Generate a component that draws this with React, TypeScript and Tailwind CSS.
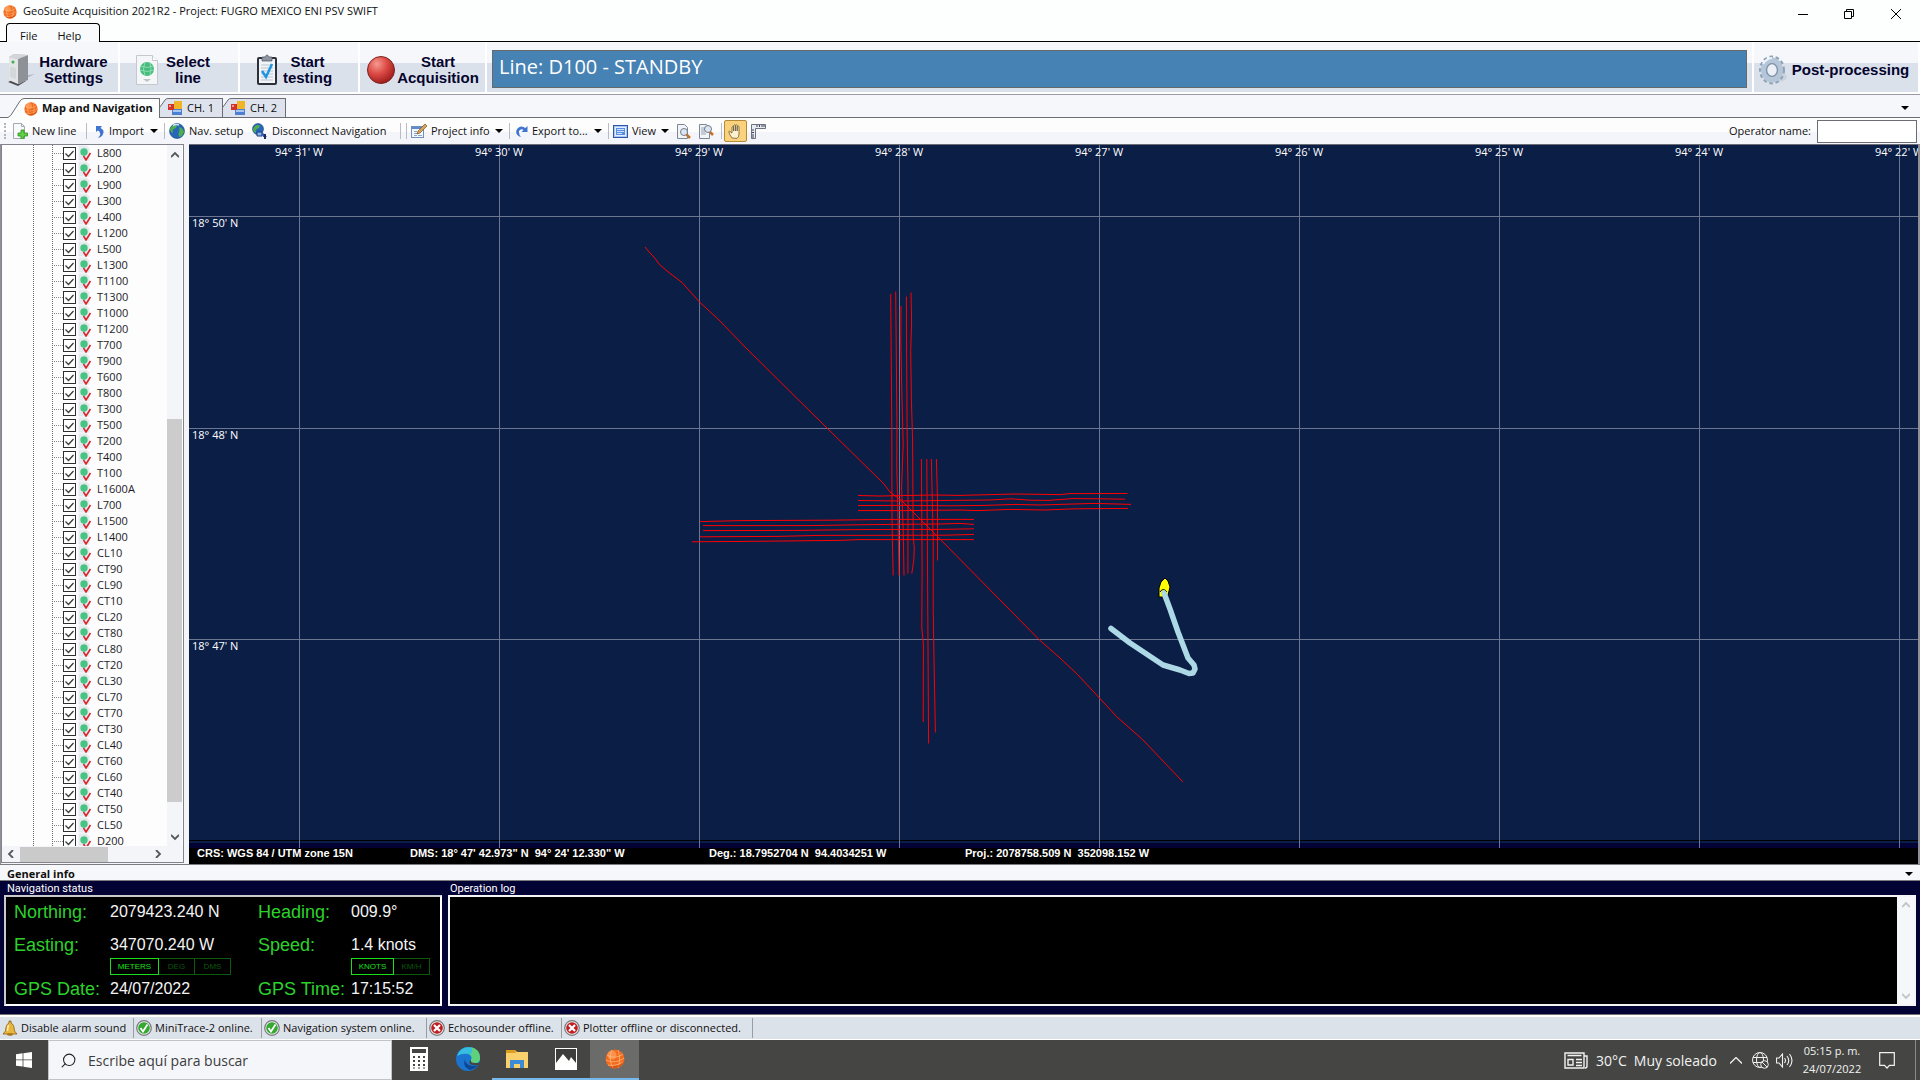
import type { ReactNode } from "react";
import { Search } from "lucide-react";

const LINES = [
  "L800", "L200", "L900", "L300", "L400", "L1200", "L500", "L1300", "T1100", "T1300", "T1000",
  "T1200", "T700", "T900", "T600", "T800", "T300", "T500", "T200", "T400", "T100", "L1600A",
  "L700", "L1500", "L1400", "CL10", "CT90", "CL90", "CT10", "CL20", "CT80", "CL80", "CT20",
  "CL30", "CL70", "CT70", "CT30", "CL40", "CT60", "CL60", "CT40", "CT50", "CL50", "D200",
];

// Map canvas coordinates, origin at its top left corner
const MERIDIANS = [
  { x: 110, label: "94° 31' W" },
  { x: 310, label: "94° 30' W" },
  { x: 510, label: "94° 29' W" },
  { x: 710, label: "94° 28' W" },
  { x: 910, label: "94° 27' W" },
  { x: 1110, label: "94° 26' W" },
  { x: 1310, label: "94° 25' W" },
  { x: 1510, label: "94° 24' W" },
  { x: 1710, label: "94° 22' W" },
];

const PARALLELS = [
  { y: 72, label: "18° 50' N" },
  { y: 284, label: "18° 48' N" },
  { y: 495, label: "18° 47' N" },
];

// Survey lines, in projected screen units
const SURVEY = [
  "645,247 650,253 654,257 659,264 667,271 682,282.5 700,302.5 719,320 745,347 827.5,428.5 884,484 890,492 901.5,500.5 934,533 1005,605 1039,639.5 1060,658 1077.5,674.5 1099.5,698 1116.5,716.5 1142.5,739.5 1183,782",
  "890.7,294 891.8,430 892,520 893.2,575.5",
  "895.7,291.5 897,430 896.8,466 898,520 899,575.5",
  "901,306 900.8,340 902,400 903.2,444 901.6,487 903.2,530 904,575.5",
  "906.4,296.5 906.6,350 907.1,430 908,487 907.9,573.5",
  "911,292.5 911.6,323 910.7,351.5 911.4,400 912.6,440 913.2,537 914.3,548 913.8,560 911.8,573.5",
  "921.4,459 922.1,566 921.8,628 923.4,644 923.2,722",
  "926.8,459 927.5,566 928.6,743.5",
  "931.4,459 933.2,541 933.2,608.5 934,660 935.4,732.5",
  "936.4,459 937.5,500 937.5,560.5",
  "858,495.5 880,496 934,495 960,495.4 1015,494 1060,494.6 1070,493.6 1127.5,493.5",
  "858,500.5 900,501 951,500.4 990,500 1011,498.8 1030,500.2 1048,500.4 1073,498.6 1100,498.8 1125,499.2",
  "858,505.5 905,505.4 951,505.8 985,505.4 1015,504.4 1040,505 1073,504 1095,503.4 1131,504.4",
  "858,510.6 905,510.6 960,510 978,510.6 1010,509.4 1045,510 1075,508.8 1128,508.4",
  "700,521.6 742,520.6 830,520.2 890,519.4 974,519.4",
  "703,525.6 810,525.6 870,524.6 940,524 960,523.4 974,524.4",
  "703,530.6 800,530.4 858,529.6 940,529.4 974,528.8",
  "700,536.8 777,536.4 820,535.4 945,535.2 974,534.4",
  "692,541.8 744,541.4 840,540.4 859,539.6 974,539.6",
];

const TREND = "1111,628.5 1130,643 1142,651 1163,665 1180,670 1189,673.5 1193,673 1195,669 1194,665 1188,658 1178,632 1170,609 1164,593";

const STATUS = [
  { kind: "bell", text: "Disable alarm sound", width: "w-[134px]" },
  { kind: "ok", text: "MiniTrace-2 online.", width: "w-[128px]" },
  { kind: "ok", text: "Navigation system online.", width: "w-[165px]" },
  { kind: "error", text: "Echosounder offline.", width: "w-[135px]" },
  { kind: "error", text: "Plotter offline or disconnected.", width: "w-[191px]" },
];

function OrangeGlobe({ size = 14 }: { size?: number }) {
  return (
    <svg width={size} height={size} viewBox="0 0 20 20" className="shrink-0">
      <circle cx="10" cy="10" r="9.5" fill="#f26a1b" />
      <circle cx="7" cy="6" r="4.5" fill="#ffa25e" opacity="0.7" />
      <g fill="none" stroke="#ffc08a" strokeWidth="0.7">
        <path d="M2 6c5 3 11 3 16-1M1 11c6 3 13 2 18-2M3 16c5 1 10 0 15-3M7 1c-3 6-2 12 1 18M13 1c2 6 2 12 0 18" />
      </g>
      <path d="M4 17a9.500 9.500 0 0 0 15-5c-4 5-9 6-15 5z" fill="#c9480a" opacity="0.7" />
    </svg>
  );
}

function ServerIcon() {
  return (
    <svg width="28" height="32" viewBox="0 0 28 32" className="shrink-0">
      <path d="M13 27l15-7-6 1z" fill="#aeb4bd" />
      <path d="M1 28l10 4 8-5-9-3z" fill="#4e4e52" />
      <path d="M2 3l5-3 14 1v24l-9 5-10-4z" fill="#b9bcc0" />
      <path d="M2 3l9 2v25l-9-4z" fill="#e2e4e6" />
      <path d="M11 5l10-4v25l-10 4z" fill="#8e9195" />
      <path d="M2 3l5-3 14 1-10 4z" fill="#d3d5d8" />
      <circle cx="6" cy="8" r="1.500" fill="#3fae4a" />
      <path d="M4 13v10M6 13v11M8 14v11" stroke="#c2c5c8" strokeWidth="0.8" />
    </svg>
  );
}

function SelectLineIcon() {
  return (
    <svg width="22" height="30" viewBox="0 0 22 30" className="shrink-0">
      <path d="M.5.5h16l5 5v24H.5z" fill="#f4f6f8" stroke="#c4c9d0" />
      <path d="M16.500.5v5h5" fill="#fff" stroke="#c4c9d0" />
      <circle cx="11" cy="14" r="7" fill="#46bd7c" />
      <path d="M5 11q6 3 12 0M4 15q7 3 14 0M9 7q-3 7 0 14M14 8q2 6 0 12" fill="none" stroke="#9be0bb" strokeWidth="0.8" />
      <path d="M7 24l4 3 4-3z" fill="#c0c4c8" />
    </svg>
  );
}

function ClipboardIcon() {
  return (
    <svg width="20" height="32" viewBox="0 0 20 32" className="shrink-0">
      <rect x="1" y="4" width="18" height="26" rx="1" fill="#f1f4f8" stroke="#2c3038" strokeWidth="2" />
      <path d="M5 3h3q2-4 4 0h3v4H5z" fill="#8d96a3" stroke="#4b5059" strokeWidth="0.7" />
      <path d="M4 11h12M4 14h12M4 17h12M4 20h12M4 23h12M4 26h12" stroke="#bac3d0" />
      <path d="M5 17l4 6 6-13" fill="none" stroke="#1e96e0" strokeWidth="2.500" />
    </svg>
  );
}

function RedBall() {
  return (
    <svg width="28" height="28" viewBox="0 0 28 28" className="shrink-0">
      <defs>
        <radialGradient id="ball" cx="0.35" cy="0.28" r="0.75">
          <stop offset="0" stopColor="#f59a90" />
          <stop offset="0.5" stopColor="#dc4a44" />
          <stop offset="1" stopColor="#9c1c1c" />
        </radialGradient>
      </defs>
      <circle cx="14" cy="14" r="13.500" fill="url(#ball)" stroke="#7c2323" />
    </svg>
  );
}

function GearIcon() {
  return (
    <svg width="28" height="30" viewBox="0 0 28 30" className="shrink-0">
      <ellipse cx="18" cy="22" rx="10" ry="5" fill="#c6ccd4" opacity="0.7" />
      <ellipse cx="13" cy="15" rx="11.500" ry="13" fill="none" stroke="#8fa3b8" strokeWidth="3" strokeDasharray="3.500 2.600" />
      <ellipse cx="13" cy="15" rx="8.500" ry="10" fill="#dbe5ef" stroke="#b4c6d8" strokeWidth="5" />
      <ellipse cx="13" cy="15" rx="5.500" ry="6.500" fill="#eaf0f6" stroke="#8494ab" strokeWidth="1.500" />
      <path d="M4 9q4-6 9-6" fill="none" stroke="#eef5fb" strokeWidth="2" />
    </svg>
  );
}

function ChannelIcon() {
  return (
    <svg width="14" height="14" viewBox="0 0 14 14" className="shrink-0">
      <rect x="6" y="0" width="8" height="8" fill="#f0b429" />
      <rect x="4" y="8" width="10" height="6" fill="#4c7fd0" />
      <rect x="5" y="9" width="8" height="2" fill="#a9c6f0" />
      <rect x="0" y="3" width="6" height="6" fill="#d0342c" />
      <rect x="1" y="4" width="2" height="2" fill="#f19a94" />
    </svg>
  );
}

function NewLineIcon() {
  return (
    <svg width="16" height="16" viewBox="0 0 16 16" className="shrink-0">
      <path d="M1.500.5h8l3 3v12h-11z" fill="#f7f9fb" stroke="#a5abb3" />
      <path d="M9.500.5v3h3" fill="none" stroke="#a5abb3" />
      <path d="M9 7h3v3h3.500v3H12v3H9v-3H6v-3h3z" fill="#5fd045" stroke="#2b8a1d" strokeWidth="0.8" />
    </svg>
  );
}

function ImportIcon() {
  return (
    <svg width="10" height="13" viewBox="0 0 10 13" className="shrink-0">
      <path d="M1 1h6L5.500 3Q10 5 8 9q-1 3-5 4 3-3 2-5-.5-2-2-2.500L1 7z" fill="#3f74cf" />
    </svg>
  );
}

function ExportIcon() {
  return (
    <svg width="12" height="13" viewBox="0 0 12 13" className="shrink-0">
      <path d="M11.500 1v6h-6l2-2Q5 3 3 6q-.500 3 2 6Q-1 10 .5 5 4-1 9.500 3z" fill="#3f74cf" />
    </svg>
  );
}

function EarthIcon({ plug = false }: { plug?: boolean }) {
  return (
    <svg width="16" height="16" viewBox="0 0 16 16" className="shrink-0">
      <circle cx={plug ? 6 : 8} cy={plug ? 6 : 8} r={plug ? 5.5 : 7.5} fill="#2766b8" stroke="#1b4680" strokeWidth="0.6" />
      <path d="M3 3q3-2 5 0-1 3-3 3t-1 4q-3-1-3-4z" fill="#4fae4c" />
      {plug ? (
        <>
          <path d="M5 9h5v4H5z" fill="#8fb5ea" stroke="#143a7c" />
          <path d="M9 8l6 6h-4z" fill="#2c4fa8" />
          <path d="M13 11v5" stroke="#1b2d5c" strokeWidth="2" />
        </>
      ) : (
        <>
          <path d="M10 4q4 1 5 5-2 5-5 5-1-3 0-5t0-5z" fill="#4fae4c" />
          <path d="M4 2.500q3-1.500 6-.5" fill="none" stroke="#cfe6fb" strokeWidth="1.500" />
        </>
      )}
    </svg>
  );
}

function ProjectIcon() {
  return (
    <svg width="16" height="14" viewBox="0 0 16 14" className="shrink-0">
      <rect x="0.500" y="2.500" width="12" height="11" fill="#f4f8fd" stroke="#6d8fbd" />
      <rect x="1" y="3" width="11" height="2" fill="#5d8bd0" />
      <path d="M3 7.500h3M3 9.500h3M3 11.500h3M7 11.500h4" stroke="#8aa5c8" />
      <path d="M6 10l1-3 7-7 2 2-7 7z" fill="#d9a35b" stroke="#7a5325" strokeWidth="0.7" />
    </svg>
  );
}

function ViewIcon() {
  return (
    <svg width="15" height="13" viewBox="0 0 15 13" className="shrink-0">
      <rect x="0.500" y="0.500" width="14" height="12" fill="#a9c6f5" stroke="#2e56a6" />
      <rect x="2.500" y="2.500" width="10" height="8" fill="#5b8de0" stroke="#e3edfb" />
      <path d="M4 4.500h7M4 6.500h7M4 8.500h5" stroke="#cfe0fa" />
    </svg>
  );
}

function PreviewIcon({ zoomed = false }: { zoomed?: boolean }) {
  return (
    <svg width="16" height="15" viewBox="0 0 16 15" className="shrink-0">
      <path d="M1.500.5h7l3 3v11h-10z" fill="#f1f4f8" stroke="#7d8793" />
      {zoomed && <path d="M3 4h4M3 6h4M3 8h4M3 10h5" stroke="#9aa4b1" />}
      <circle cx={zoomed ? 10 : 8} cy={zoomed ? 5 : 8} r="3.500" fill="#dbe6f2" stroke="#737d89" />
      <path d={zoomed ? "M12 8l3 3" : "M10.500 10.500l3.500 3.500"} stroke="#c4702b" strokeWidth="2.500" />
    </svg>
  );
}

function HandIcon() {
  return (
    <svg width="15" height="15" viewBox="0 0 15 15">
      <path
        d="M4 14Q1 10 .8 7.500q.7-1 2.200.8L4 9V3q.8-1.200 1.600 0V7 1.500q1-1.200 1.800 0V7 1.200q1-1 1.800 0V7 2.500q1-1 1.800 0V10q0 3-2 4.400z"
        fill="#fdf0d0"
        stroke="#6d5a35"
        strokeWidth="0.8"
      />
    </svg>
  );
}

function RulerIcon() {
  return (
    <svg width="15" height="15" viewBox="0 0 15 15">
      <path d="M.5.5h14v4h-10v10h-4z" fill="#e8ecf2" stroke="#5b6472" strokeWidth="0.9" />
      <path d="M6 1v2M8.500 1v2M11 1v2M13 1v2M1 6h2M1 8.500h2M1 11h2M1 13h2" stroke="#39404c" />
    </svg>
  );
}

function StatusIcon({ kind }: { kind: string }) {
  if (kind === "bell") {
    return (
      <svg width="16" height="16" viewBox="0 0 16 16" className="shrink-0">
        <path d="M7 1h2v2q3 1 3.500 8l2.500 3H1l2.500-3Q4 4 7 3z" fill="#eab53c" stroke="#8a5f10" strokeWidth="0.8" />
        <path d="M6.500 5q-1 3-1 6" stroke="#fdeeb6" strokeWidth="1.500" fill="none" />
        <ellipse cx="8" cy="14.500" rx="3" ry="1.200" fill="#a8741a" />
      </svg>
    );
  }
  const ok = kind === "ok";
  return (
    <svg width="16" height="16" viewBox="0 0 16 16" className="shrink-0">
      <circle cx="8" cy="8" r="7.300" fill="#e9e9ea" stroke="#77797c" strokeWidth="1.200" />
      <circle cx="8" cy="8" r="5.800" fill={ok ? "#35a832" : "#c01f22"} />
      {ok ? (
        <path d="M4.500 8l2.500 3.500 4.500-7" fill="none" stroke="#fff" strokeWidth="1.800" />
      ) : (
        <path d="M5 5l6 6M11 5l-6 6" stroke="#fff" strokeWidth="2.200" />
      )}
    </svg>
  );
}

function Caret({ className = "" }: { className?: string }) {
  return (
    <svg width="8" height="4" viewBox="0 0 8 4" className={`shrink-0 ${className}`}>
      <path d="M0 0h8L4 4z" fill="#000" />
    </svg>
  );
}

function Chevron({ d, color = "#55565a" }: { d: string; color?: string }) {
  return (
    <svg width="8" height="8" viewBox="0 0 8 8">
      <path d={d} fill="none" stroke={color} strokeWidth="1.800" />
    </svg>
  );
}

function RibbonButton({ icon, width, children }: { icon: ReactNode; width: string; children: ReactNode }) {
  return (
    <button
      type="button"
      className={`flex shrink-0 items-center border-r-2 border-white pt-1.5 text-[15px] leading-4 font-bold text-[#04042e] ${width}`}
    >
      {icon}
      <span className="flex-1 text-center">{children}</span>
    </button>
  );
}

function ToolButton({ icon, width, label, caret = false }: { icon: ReactNode; width: string; label: string; caret?: boolean }) {
  return (
    <button type="button" className={`flex h-full shrink-0 items-center gap-1 whitespace-nowrap ${width}`}>
      {icon}
      <span>{label}</span>
      {caret && <Caret className="ml-auto" />}
    </button>
  );
}

function Separator({ className = "mx-1" }: { className?: string }) {
  return <div className={`h-4 w-px shrink-0 bg-[#b9bcc6] ${className}`} />;
}

function TitleBar() {
  return (
    <header className="shrink-0">
      <div className="flex h-[23px] items-center pl-[3px]">
        <OrangeGlobe />
        <h1 className="ml-1.5 flex-1 text-[11px]">GeoSuite Acquisition 2021R2 - Project: FUGRO MEXICO ENI PSV SWIFT</h1>
        <button type="button" aria-label="Minimize" className="flex h-full w-[46px] items-end justify-center">
          <svg width="10" height="10" viewBox="0 0 10 10"><path d="M0 1.500h10" stroke="#000" /></svg>
        </button>
        <button type="button" aria-label="Restore" className="flex h-full w-[46px] items-end justify-center pb-1">
          <svg width="10" height="10" viewBox="0 0 10 10">
            <path d="M.5 2.500h7v7h-7zM2.500 2.500v-2h7v7h-2" fill="none" stroke="#000" />
          </svg>
        </button>
        <button type="button" aria-label="Close" className="flex h-full w-[48px] items-end justify-center pb-1">
          <svg width="10" height="10" viewBox="0 0 10 10"><path d="M0 0l10 10M10 0L0 10" stroke="#000" /></svg>
        </button>
      </div>
      <nav className="flex h-[19px] text-[11px]">
        <div className="w-1.5 border-b border-black" />
        <div className="flex w-[94px] items-center gap-5 rounded-t border-x border-t border-black bg-[#f9fafc] pt-1.5 pl-[13px]">
          <button type="button">File</button>
          <button type="button">Help</button>
        </div>
        <div className="flex-1 border-b border-black" />
      </nav>
    </header>
  );
}

function Ribbon() {
  return (
    <div className="flex h-[52px] shrink-0 border-b-2 border-white bg-linear-to-b from-[#f6f7fb] from-43% to-[#dbe1ea] to-43% font-['Liberation_Sans',sans-serif]">
      <RibbonButton icon={<ServerIcon />} width="w-[120px] pl-[7px] pr-1.5">Hardware<br />Settings</RibbonButton>
      <RibbonButton icon={<SelectLineIcon />} width="w-[120px] pl-4 pr-5">Select<br />line</RibbonButton>
      <RibbonButton icon={<ClipboardIcon />} width="w-[120px] pl-[17px] pr-5">Start<br />testing</RibbonButton>
      <RibbonButton icon={<RedBall />} width="w-[127px] pl-[7px] pr-1">Start<br />Acquisition</RibbonButton>
      <div className="mt-2 mb-1 ml-[5px] mr-[5px] flex flex-1 items-center border border-[#666a6c] bg-[#4682b4] pb-1 pl-1.5 font-['Open_Sans',sans-serif] text-[20px] text-white">
        Line: D100 - STANDBY
      </div>
      <div className="w-0.5 bg-white" />
      <RibbonButton icon={<GearIcon />} width="w-[166px] pl-[5px] pr-1">Post-processing</RibbonButton>
    </div>
  );
}

function TabStrip() {
  return (
    <div role="tablist" className="flex h-[24px] shrink-0 items-end border-t border-[#9a9aa4] bg-[#f6f7fb] text-[11px]">
      <div className="h-full w-2 border-b border-[#6c6c74]" />
      <button type="button" role="tab" aria-selected="true" className="flex h-5 items-end">
        <svg width="16" height="20" viewBox="0 0 16 20" className="shrink-0">
          <path d="M0 20Q3 19 5 14L12 3q2-2.500 4-2.500V20z" fill="#fcfdfd" />
          <path d="M0 19.500Q3 18 5 14L12 3q2-2.500 4-2.500" fill="none" stroke="#6c6c74" />
        </svg>
        <span className="flex h-5 w-[136px] items-center gap-1 border-t border-r border-[#6c6c74] bg-[#fcfdfd] font-bold whitespace-nowrap">
          <OrangeGlobe />
          Map and Navigation
        </span>
      </button>
      {["CH. 1", "CH. 2"].map((name) => (
        <button key={name} type="button" role="tab" aria-selected="false" className="flex h-5 items-end border-b border-[#6c6c74]">
          <svg width="8" height="19" viewBox="0 0 8 19" className="shrink-0">
            <path d="M0 19V9L5 2q1-1.500 3-1.500V19z" fill="#dde2ec" />
            <path d="M0 9L5 2q1-1.500 3-1.500" fill="none" stroke="#6c6c74" />
          </svg>
          <span className="flex h-[19px] w-[55px] items-center gap-[5px] border-t border-r border-[#6c6c74] bg-[#dde2ec]">
            <ChannelIcon />
            {name}
          </span>
        </button>
      ))}
      <div className="flex h-full flex-1 items-center justify-end border-b border-[#6c6c74] pr-[11px] pt-1">
        <Caret />
      </div>
    </div>
  );
}

function Toolbar() {
  return (
    <div className="flex h-[26px] shrink-0 items-center bg-linear-to-b from-[#fdfdfe] from-55% to-[#f4f5fa] to-55% pl-1 text-[11px]">
      <div className="mr-1.5 h-4 border-l-2 border-dotted border-[#b4b6be]" />
      <ToolButton icon={<NewLineIcon />} width="w-[68px]" label="New line" />
      <Separator className="ml-1.5 mr-2" />
      <ToolButton icon={<ImportIcon />} width="w-[63px]" label="Import" caret />
      <Separator className="ml-1.5 mr-1" />
      <ToolButton icon={<EarthIcon />} width="w-[83px]" label="Nav. setup" />
      <ToolButton icon={<EarthIcon plug />} width="w-[143px]" label="Disconnect Navigation" />
      <Separator className="ml-[5px] mr-[5px]" />
      <Separator className="mr-1" />
      <ToolButton icon={<ProjectIcon />} width="w-[92px]" label="Project info" caret />
      <Separator className="mx-1.5" />
      <ToolButton icon={<ExportIcon />} width="w-[86px]" label="Export to..." caret />
      <Separator className="ml-1.5 mr-1" />
      <ToolButton icon={<ViewIcon />} width="w-[56px]" label="View" caret />
      <button type="button" aria-label="Print preview" className="ml-[7px] w-[22px]"><PreviewIcon /></button>
      <button type="button" aria-label="Page zoom" className="w-4"><PreviewIcon zoomed /></button>
      <Separator className="ml-[7px] mr-0.5" />
      <button
        type="button"
        aria-label="Pan"
        aria-pressed="true"
        className="flex h-[22px] w-[23px] shrink-0 items-center justify-center rounded-xs border border-[#b5893a] bg-[#fbd27c]"
      >
        <HandIcon />
      </button>
      <button type="button" aria-label="Measure" className="ml-1 shrink-0"><RulerIcon /></button>
      <label htmlFor="operator" className="mr-1.5 ml-auto text-[11px]">Operator name:</label>
      <input id="operator" type="text" className="mr-[3px] h-[23px] w-[100px] border border-[#6c6c74] bg-white px-1" />
    </div>
  );
}

function LineRow({ name }: { name: string }) {
  const id = `line-${name}`;
  return (
    <li className="flex h-4 items-center">
      <div className="ml-[50px] w-[11px] border-t border-dotted border-[#8a8a8a]" />
      <div className="relative h-[13px] w-[13px] shrink-0">
        <input id={id} type="checkbox" defaultChecked className="block h-[13px] w-[13px] appearance-none border border-[#2f2f2f] bg-white" />
        <svg width="13" height="13" viewBox="0 0 13 13" className="pointer-events-none absolute inset-0">
          <path d="M2.500 6.500l3 3L10.500 4" fill="none" stroke="#3a3a3a" strokeWidth="1.300" />
        </svg>
      </div>
      <svg width="14" height="16" viewBox="0 0 14 16" className="ml-0.5 shrink-0">
        <path d="M.5.5h8l3 3v12H.5z" fill="#e6ebf1" />
        <circle cx="6" cy="7" r="3.700" fill="#47c383" />
        <path d="M5.500 11l2.500 4 4.500-7" fill="none" stroke="#d8262b" strokeWidth="1.600" />
      </svg>
      <label htmlFor={id} className="ml-[5px] text-[11px]">{name}</label>
    </li>
  );
}

function LineTree() {
  return (
    <aside className="mr-[5px] mb-px flex w-[183px] shrink-0 flex-col border border-[#82838c] bg-[#fdfdfd]">
      <div className="flex min-h-0 flex-1">
        <ul className="relative min-w-0 flex-1 overflow-hidden text-[#1c1c28]">
          <div className="absolute inset-y-0 left-[31px] border-l border-dotted border-[#6a6a6a]" />
          <div className="absolute inset-y-0 left-[50px] border-l border-dotted border-[#6a6a6a]" />
          {LINES.map((name) => (
            <LineRow key={name} name={name} />
          ))}
        </ul>
        <div className="mr-px flex w-[15px] flex-col items-center bg-[#f4f5f8]">
          <button type="button" aria-label="Scroll up" className="pt-1.5 pb-1"><Chevron d="M0 6l4-4 4 4" /></button>
          <div className="flex-1" />
          <div className="w-full grow-[1.5] basis-0 bg-[#cbcccb]" />
          <div className="h-[26px]" />
          <button type="button" aria-label="Scroll down" className="h-[18px]"><Chevron d="M0 2l4 4 4-4" /></button>
        </div>
      </div>
      <div className="flex h-4 items-center bg-[#f4f5f8]">
        <button type="button" aria-label="Scroll left" className="flex w-[18px] justify-center"><Chevron d="M6 0L2 4l4 4" /></button>
        <div className="h-[15px] w-[88px] bg-[#c9cac9]" />
        <button type="button" aria-label="Scroll right" className="ml-auto mr-4 flex w-[18px] justify-center"><Chevron d="M2 0l4 4-4 4" /></button>
      </div>
    </aside>
  );
}

function SurveyMap() {
  return (
    <section className="flex min-w-0 flex-1 flex-col border-t border-[#6c6c74] bg-[#0b1e46]">
      <div className="relative min-h-0 flex-1 overflow-hidden text-[11px] leading-[14px] text-white">
        <svg width="100%" height="100%" className="absolute inset-0">
          <rect y="695" width="100%" height="1" fill="#000" />
          <rect y="698" width="100%" height="6" fill="#030234" />
          <g stroke="#6c7690">
            {MERIDIANS.map((m) => (
              <line key={m.x} x1={m.x + 0.5} x2={m.x + 0.5} y1="0" y2="100%" />
            ))}
            {PARALLELS.map((p) => (
              <line key={p.y} x1="0" x2="100%" y1={p.y - 0.5} y2={p.y - 0.5} />
            ))}
          </g>
          <g transform="translate(-189 -145)" fill="none">
            {SURVEY.map((points) => (
              <polyline key={points} points={points} stroke="#ff0000" strokeWidth="1" />
            ))}
            <path d="M1159 597v-9l2-6 4-4 3 3 2 6-2 8-2 2z" fill="#ffff00" stroke="#000" />
            <path d="M1160 592q3-5 7 0" stroke="#000" />
            <polyline points={TREND} stroke="#add8e6" strokeWidth="5.500" strokeLinecap="round" strokeLinejoin="round" />
          </g>
        </svg>
        {MERIDIANS.map((m) => (
          <span key={m.x} className="absolute top-0 -translate-x-1/2 whitespace-nowrap" style={{ left: m.x }}>{m.label}</span>
        ))}
        {PARALLELS.map((p) => (
          <span key={p.y} className="absolute left-[3px]" style={{ top: p.y - 1 }}>{p.label}</span>
        ))}
      </div>
      <div className="flex h-4 shrink-0 items-center bg-black pb-1.5 pl-2 font-['Liberation_Sans',sans-serif] text-[11px] leading-[10px] font-bold whitespace-pre text-white">
        <span className="w-[213px]">CRS: WGS 84 / UTM zone 15N</span>
        <span className="w-[299px]">DMS: 18° 47' 42.973" N  94° 24' 12.330" W</span>
        <span className="w-[256px]">Deg.: 18.7952704 N  94.4034251 W</span>
        <span>Proj.: 2078758.509 N  352098.152 W</span>
      </div>
    </section>
  );
}

function UnitButton({ label, width, active = false }: { label: string; width: string; active?: boolean }) {
  const tone = active ? "border-[#18e018] text-[#18e018]" : "border-[#0c5a0c] text-[#0a5a0a]";
  return (
    <button type="button" aria-pressed={active} className={`flex h-[17px] items-center justify-center border text-[8px] leading-none ${tone} ${width}`}>
      {label}
    </button>
  );
}

function GeneralInfo() {
  return (
    <>
      <div className="flex h-[17px] shrink-0 items-center justify-between border-t border-b border-[#7c7c80] bg-[#f6f7fa] pt-0.5 pr-[7px] pl-[7px]">
        <h2 className="text-[11px] leading-[13px] font-bold">General info</h2>
        <Caret />
      </div>
      <div className="flex h-[134px] shrink-0 gap-1.5 border-b border-[#6f7070] bg-[#030234] pr-1 pb-2 pl-1 text-white">
        <section className="flex w-[438px] shrink-0 flex-col">
          <h3 className="h-[14px] pl-[3px] font-[Roboto,sans-serif] text-[11px] leading-[15px]">Navigation status</h3>
          <div className="grid flex-1 grid-cols-[96px_148px_93px_1fr] grid-rows-[30px_30px_18px_28px] border-2 border-t-[#c9cacc] border-r-white border-b-white border-l-[#c9cacc] bg-black pl-2 font-['Liberation_Sans',sans-serif] text-[16px] leading-6 text-[#f4f4f4]">
            <span className="self-center text-[18px] text-[#2cd22c]">Northing:</span>
            <span className="self-center">2079423.240 N</span>
            <span className="self-center text-[18px] text-[#2cd22c]">Heading:</span>
            <span className="self-center">009.9°</span>
            <span className="self-end text-[18px] text-[#2cd22c]">Easting:</span>
            <span className="self-end">347070.240 W</span>
            <span className="self-end text-[18px] text-[#2cd22c]">Speed:</span>
            <span className="self-end">1.4 knots</span>
            <div className="col-start-2 flex items-end">
              <UnitButton label="METERS" width="w-[49px]" active />
              <UnitButton label="DEG" width="w-9 border-l-0" />
              <UnitButton label="DMS" width="w-9 border-l-0" />
            </div>
            <div className="col-start-4 flex items-end">
              <UnitButton label="KNOTS" width="w-[43px]" active />
              <UnitButton label="KM/H" width="w-9 border-l-0" />
            </div>
            <span className="self-center text-[18px] whitespace-nowrap text-[#2cd22c]">GPS Date:</span>
            <span className="self-center">24/07/2022</span>
            <span className="self-center text-[18px] whitespace-nowrap text-[#2cd22c]">GPS Time:</span>
            <span className="self-center">17:15:52</span>
          </div>
        </section>
        <section className="flex min-w-0 flex-1 flex-col">
          <label htmlFor="oplog" className="h-[14px] pl-0.5 font-[Roboto,sans-serif] text-[11px] leading-[15px]">Operation log</label>
          <div className="flex flex-1 border-2 border-[#f4f4f4]">
            <textarea id="oplog" readOnly className="min-w-0 flex-1 resize-none bg-black" />
            <div className="flex w-[17px] flex-col items-center justify-between bg-[#f6f7fa] py-1">
              <Chevron d="M0 6l4-4 4 4" color="#c3c4c8" />
              <Chevron d="M0 2l4 4 4-4" color="#c3c4c8" />
            </div>
          </div>
        </section>
      </div>
    </>
  );
}

function StatusBar() {
  return (
    <footer className="flex h-[25px] shrink-0 items-center border-t-2 border-b border-white bg-[#dce2ea] text-[11px]">
      {STATUS.map((s) => (
        <div key={s.text} className={`flex h-5 items-center gap-[3px] border-r border-[#9a9ca4] pl-0.5 whitespace-nowrap ${s.width}`}>
          <StatusIcon kind={s.kind} />
          {s.text}
        </div>
      ))}
    </footer>
  );
}

function TaskButton({ label, children, state = "" }: { label: string; children: ReactNode; state?: string }) {
  return (
    <button type="button" aria-label={label} className={`flex w-[49px] items-center justify-center border-b-2 ${state || "border-transparent"}`}>
      {children}
    </button>
  );
}

function Taskbar() {
  return (
    <div className="flex h-10 shrink-0 bg-[#454643] text-[#f2f2f2]">
      <button type="button" aria-label="Start" className="flex w-12 items-center justify-center">
        <svg width="16" height="16" viewBox="0 0 16 16" fill="#fff">
          <path d="M0 2.200L6.600 1.300v6.200H0zM7.400 1.200L16 0v7.500H7.400zM0 8.300h6.600v6.300L0 13.700zM7.400 8.300H16V16l-8.600-1.200z" />
        </svg>
      </button>
      <label className="flex w-[344px] shrink-0 items-center border border-[#c2c3c6] bg-[#f5f6fa] pl-[11px]">
        <Search size={17} strokeWidth={1.5} className="-scale-x-100 text-[#222]" />
        <input
          type="text"
          aria-label="Escribe aquí para buscar"
          placeholder="Escribe aquí para buscar"
          className="ml-[11px] min-w-0 flex-1 text-[14px] outline-none placeholder:text-[#3c3c3c]"
        />
      </label>
      <div className="ml-0.5 flex">
        <TaskButton label="Calculator">
          <svg width="18" height="24" viewBox="0 0 18 24">
            <rect width="18" height="24" fill="#fff" />
            <rect x="2" y="2" width="14" height="4" fill="#454643" />
            <path d="M3 10h12M3 14h12M3 18h12" stroke="#454643" strokeWidth="2" strokeDasharray="2 3" />
            <path d="M3 21h12" stroke="#454643" strokeDasharray="2 3" />
          </svg>
        </TaskButton>
        <TaskButton label="Edge">
          <svg width="24" height="24" viewBox="0 0 24 24">
            <circle cx="12" cy="12" r="12" fill="#1b74cf" />
            <path d="M1 9Q4 0 13 0q10 1 11 11 0 5-5 5-5 0-4-3 2-4-3-6-6-1-11 2z" fill="#36bde0" />
            <path d="M15 0q9 2 9 11 0 5-5 5-5 0-4-3 2-3-1-6 4-2 1-7z" fill="#5fd17c" />
            <path d="M9 12q-3 8 5 11 5-1 8-5-4 2-9 0-4-2-4-6z" fill="#0c4795" />
            <path d="M15 13q-1 3 4 3h5v2h-2q-5 1-8-1-2-2 1-4z" fill="#454643" />
          </svg>
        </TaskButton>
        <TaskButton label="Explorer" state="border-[#76b9ed]">
          <svg width="22" height="19" viewBox="0 0 22 19">
            <path d="M0 0h9l2 2h11v16H0z" fill="#f9d06b" />
            <path d="M0 0h9l1 3H0z" fill="#dd9e1d" />
            <path d="M4 10h14v8h-4v-4H8v4H4z" fill="#3a8bd8" />
          </svg>
        </TaskButton>
        <TaskButton label="Photos" state="border-[#76b9ed]">
          <svg width="22" height="22" viewBox="0 0 22 22">
            <rect x="0.500" y="0.500" width="21" height="21" fill="#3d3e3b" stroke="#fff" />
            <path d="M1 15l7-9 6 7 2-4 5 6v6H1z" fill="#fff" />
          </svg>
        </TaskButton>
        <TaskButton label="GeoSuite" state="border-[#76b9ed] bg-[#6b6b6a]">
          <OrangeGlobe size={20} />
        </TaskButton>
      </div>
      <div className="ml-auto flex items-center">
        <svg width="24" height="17" viewBox="0 0 24 17" fill="none" stroke="#f2f2f2" strokeWidth="1.400">
          <path d="M1 1h19v15H1zM20 4h3v10q0 2-2 2M3.500 3.500h14M12 7.500h6M12 10.500h6M12 13.500h6M4 7.500h5v5.500H4z" />
        </svg>
        <button type="button" className="ml-2 flex w-[134px] gap-[7px] text-[14px] whitespace-nowrap">
          <span>30°C</span>
          <span>Muy soleado</span>
        </button>
        <svg width="12" height="7" viewBox="0 0 12 7"><path d="M0 6.500l6-6 6 6" fill="none" stroke="#f2f2f2" strokeWidth="1.300" /></svg>
        <svg width="17" height="17" viewBox="0 0 17 17" className="ml-2.5" fill="none" stroke="#f2f2f2">
          <circle cx="8" cy="8" r="7.500" />
          <ellipse cx="8" cy="8" rx="3.500" ry="7.500" />
          <path d="M1 5.500h14M1 10.500h9" />
          <circle cx="12.500" cy="12.500" r="3.800" fill="#454643" />
          <path d="M10 10l5 5" />
        </svg>
        <svg width="17" height="15" viewBox="0 0 17 15" className="ml-[7px]" fill="none" stroke="#f2f2f2" strokeWidth="1.100">
          <path d="M.5 5h2.500l3.500-4v13L3 10H.5zM8.500 5q2 2.500 0 5M11 3q3.500 4.500 0 9M13.500 1q5 6.500 0 13" />
        </svg>
        <time className="ml-2 w-[62px] text-center text-[11px] leading-[18px] whitespace-nowrap">05:15 p. m.<br />24/07/2022</time>
        <svg width="16" height="17" viewBox="0 0 16 17" className="ml-4" fill="none" stroke="#f2f2f2" strokeWidth="1.200">
          <path d="M.7.7h14.600v12.600H10.500L8 16l-2.500-2.700H.7z" />
        </svg>
        <div className="ml-5 mr-1 h-10 w-px bg-[#8a8b89]" />
      </div>
    </div>
  );
}

export default function App() {
  return (
    <div className="flex h-screen flex-col overflow-hidden bg-[#fdfefe] font-['Open_Sans','Noto_Sans',sans-serif] text-[#101010]">
      <TitleBar />
      <Ribbon />
      <TabStrip />
      <Toolbar />
      <main className="flex min-h-0 flex-1 border-l border-r-2 border-[#8f8f96] bg-[#f4f5f9]">
        <LineTree />
        <SurveyMap />
      </main>
      <GeneralInfo />
      <StatusBar />
      <Taskbar />
    </div>
  );
}
